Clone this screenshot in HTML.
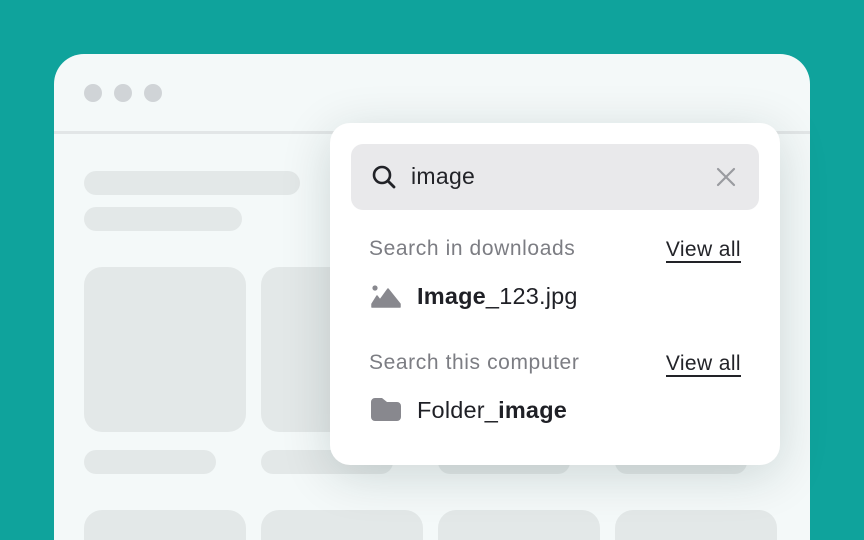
<!DOCTYPE html>
<html><head><meta charset="utf-8"><style>
*{margin:0;padding:0;box-sizing:border-box}
html,body{width:864px;height:540px;overflow:hidden}
body{background:#0fa39c;font-family:"Liberation Sans",sans-serif;position:relative}
.win{position:absolute;left:54px;top:54px;width:756px;height:486px;background:#f4f9f9;border-radius:30px 30px 0 0;overflow:hidden}
.a{position:absolute;background:#e3e8e8}
.dot{position:absolute;width:18px;height:18px;border-radius:50%;background:#d0d4d7;top:30px}
.pop{position:absolute;left:330px;top:123px;width:450px;height:342px;background:#fff;border-radius:20px;box-shadow:0 10px 50px rgba(0,40,40,0.16)}
.sb{position:absolute;left:21px;top:21px;width:408px;height:66px;background:#e9e9eb;border-radius:12px}
.t{position:absolute;white-space:nowrap}
.h{font-size:21px;letter-spacing:0.6px;color:#7c7d83}
.va{font-size:21px;letter-spacing:0.4px;color:#222328;border-bottom:2px solid #222328;line-height:23px;right:39px}
.r{font-size:23.5px;letter-spacing:0.2px;color:#1f2026}
</style></head><body>
<div class="win">
<div class="dot" style="left:30px"></div><div class="dot" style="left:60px"></div><div class="dot" style="left:90px"></div>
<div class="a" style="left:0;top:77px;width:756px;height:3px;background:#e2e6e7"></div>
<div class="a" style="left:30px;top:117px;width:216px;height:24px;border-radius:12px"></div>
<div class="a" style="left:30px;top:153px;width:158px;height:24px;border-radius:12px"></div>
<div class="a" style="left:30px;top:213px;width:162px;height:165px;border-radius:18px"></div>
<div class="a" style="left:207px;top:213px;width:162px;height:165px;border-radius:18px"></div>
<div class="a" style="left:384px;top:213px;width:162px;height:165px;border-radius:18px"></div>
<div class="a" style="left:561px;top:213px;width:162px;height:165px;border-radius:18px"></div>
<div class="a" style="left:30px;top:396px;width:132px;height:24px;border-radius:12px"></div>
<div class="a" style="left:207px;top:396px;width:132px;height:24px;border-radius:12px"></div>
<div class="a" style="left:384px;top:396px;width:132px;height:24px;border-radius:12px"></div>
<div class="a" style="left:561px;top:396px;width:132px;height:24px;border-radius:12px"></div>
<div class="a" style="left:30px;top:456px;width:162px;height:100px;border-radius:18px"></div>
<div class="a" style="left:207px;top:456px;width:162px;height:100px;border-radius:18px"></div>
<div class="a" style="left:384px;top:456px;width:162px;height:100px;border-radius:18px"></div>
<div class="a" style="left:561px;top:456px;width:162px;height:100px;border-radius:18px"></div>
</div>
<div class="pop">
<div class="sb">
<svg style="position:absolute;left:20px;top:20px" width="28" height="28" viewBox="0 0 28 28"><circle cx="11" cy="11" r="8" fill="none" stroke="#222328" stroke-width="2.6"/><path d="M17 17l6 6" stroke="#222328" stroke-width="2.8" stroke-linecap="round"/></svg>
<div class="t" style="left:60px;top:19px;font-size:23px;letter-spacing:0.3px;color:#222328">image</div>
<svg style="position:absolute;left:364px;top:22px" width="22" height="22" viewBox="0 0 22 22"><path d="M3 3l16 16M19 3L3 19" stroke="#9a9ba0" stroke-width="2.2" stroke-linecap="round"/></svg>
</div>
<div class="t h" style="left:39px;top:114px">Search in downloads</div>
<div class="t va" style="top:115px">View all</div>
<svg style="position:absolute;left:41px;top:162px" width="30" height="24" viewBox="0 0 30 24"><circle cx="4" cy="3" r="2.6" fill="#88888e"/><path d="M1 22 L1 19 L6 11 L9 15 L17 4 L29 19 L29 22 Z" fill="#88888e" stroke="#88888e" stroke-width="1.5" stroke-linejoin="round"/></svg>
<div class="t r" style="left:87px;top:160px"><b>Image</b>_123.jpg</div>
<div class="t h" style="left:39px;top:228px">Search this computer</div>
<div class="t va" style="top:229px">View all</div>
<svg style="position:absolute;left:41px;top:275px" width="30" height="23" viewBox="0 0 30 23"><path d="M4 0h7l5 4h10a4 4 0 0 1 4 4v11a4 4 0 0 1-4 4H4a4 4 0 0 1-4-4V4a4 4 0 0 1 4-4z" fill="#88888e"/></svg>
<div class="t r" style="left:87px;top:274px">Folder_<b>image</b></div>
</div>
</body></html>
